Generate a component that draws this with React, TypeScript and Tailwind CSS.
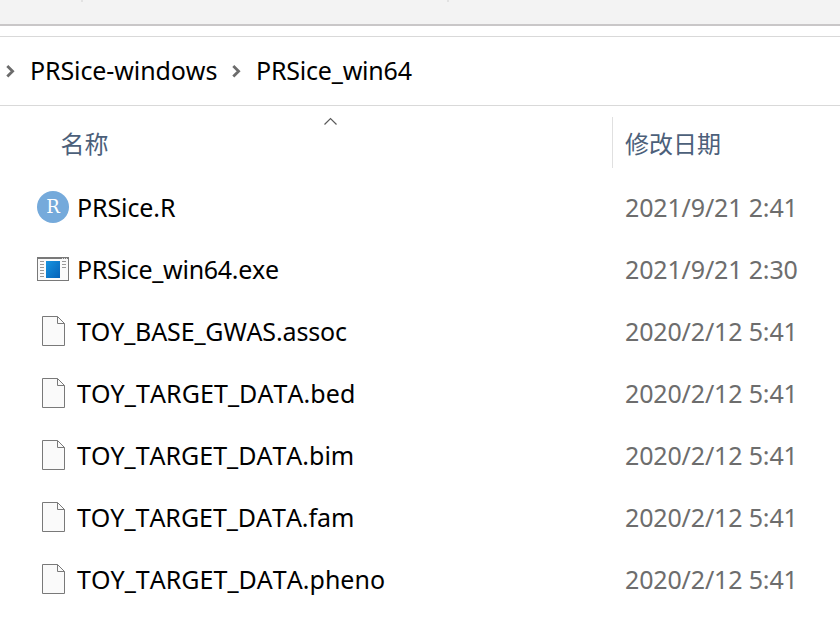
type Kind = 'r' | 'exe' | 'file';

const files: { name: string; date: string; kind: Kind; tracking: string }[] = [
  { name: 'PRSice.R', date: '2021/9/21 2:41', kind: 'r', tracking: 'tracking-[-0.1px]' },
  { name: 'PRSice_win64.exe', date: '2021/9/21 2:30', kind: 'exe', tracking: 'tracking-[-0.28px]' },
  { name: 'TOY_BASE_GWAS.assoc', date: '2020/2/12 5:41', kind: 'file', tracking: 'tracking-[-0.14px]' },
  { name: 'TOY_TARGET_DATA.bed', date: '2020/2/12 5:41', kind: 'file', tracking: 'tracking-[0.08px]' },
  { name: 'TOY_TARGET_DATA.bim', date: '2020/2/12 5:41', kind: 'file', tracking: '' },
  { name: 'TOY_TARGET_DATA.fam', date: '2020/2/12 5:41', kind: 'file', tracking: 'tracking-[-0.03px]' },
  { name: 'TOY_TARGET_DATA.pheno', date: '2020/2/12 5:41', kind: 'file', tracking: 'tracking-[0.03px]' },
];

function Chevron() {
  return (
    <svg width="10" height="14" viewBox="0 0 10 14" fill="none" className="shrink-0">
      <path d="M1.3 2 L6.6 7.3 L1.3 12.6" stroke="#6c6c6c" strokeWidth="2.8" />
    </svg>
  );
}

function FileIcon({ kind }: { kind: Kind }) {
  if (kind === 'r') {
    return (
      <div className="flex h-8 w-8 items-center justify-center rounded-full bg-[#75aadb] pb-px font-['DejaVu_Serif',serif] text-[18px] leading-none text-white">
        R
      </div>
    );
  }
  if (kind === 'exe') {
    return (
      <svg width="32" height="24" viewBox="0 0 32 24" shapeRendering="crispEdges">
        <defs>
          <linearGradient id="blue" x1="0" y1="0" x2="1" y2="1">
            <stop offset="0" stopColor="#1593e0" />
            <stop offset="1" stopColor="#0662b8" />
          </linearGradient>
        </defs>
        <rect x="0.5" y="0.5" width="31" height="23" fill="#fafafa" stroke="#797979" />
        <rect x="0" y="0" width="32" height="2" fill="#797979" />
        <path d="M25 1.5h1M27 1.5h1M29 1.5h1" stroke="#ddd" />
        <rect x="9" y="4" width="14" height="17" fill="url(#blue)" />
        <path
          d="M3 4.5h4M3 7.5h4M3 10.5h4M3 13.5h4M3 16.5h4M3 19.5h4M25 4.5h4M25 7.5h4M25 10.5h4"
          stroke="#999"
        />
      </svg>
    );
  }
  return (
    <svg width="23" height="30" viewBox="0 0 23 30" className="ml-px">
      <path d="M0.5 0.5H15.5L22.5 7.5V29.5H0.5Z" fill="#fafafa" stroke="#797979" />
      <path d="M15.5 0.5V7.5H22.5" fill="none" stroke="#797979" />
    </svg>
  );
}

export default function App() {
  return (
    <div className="flex h-[623px] w-[840px] flex-col overflow-hidden bg-white font-['Noto_Sans','Noto_Sans_CJK_SC',sans-serif] text-[25px] leading-[34px] text-black [font-kerning:none]">
      <div className="flex h-[26px] shrink-0 border-b-2 border-[#c9c7c8] bg-[#f3f3f3]">
        <div className="ml-[81px] h-[2px] w-[2px] bg-[#e2e2e2]" />
        <div className="ml-[364px] h-[2px] w-[2px] bg-[#e2e2e2]" />
      </div>
      <div className="mt-[10px] flex h-[70px] shrink-0 items-center border-y border-[#d9d9d9] pl-[6px]">
        <Chevron />
        <span className="ml-[14px] w-[202px] whitespace-nowrap pb-[2px] tracking-[-0.1px]">PRSice-windows</span>
        <Chevron />
        <span className="ml-[14px] whitespace-nowrap pb-[2px] tracking-[-0.2px]">PRSice_win64</span>
      </div>
      <div className="flex h-[70px] shrink-0 text-[24px] text-[#4c607a]">
        <div className="flex w-[612px] pl-[60.5px] pt-[11px]">
          <span className="w-[263.5px] pt-[10px]">名称</span>
          <svg width="14" height="8" viewBox="0 0 14 8" fill="none">
            <path d="M0.5 7.5 L6.5 1.5 L12.5 7.5" stroke="#5a5a5a" strokeWidth="1.2" />
          </svg>
        </div>
        <div className="mt-[11px] h-[51px] border-l border-[#e0e0e0] pl-[12px] pt-[10px]">修改日期</div>
      </div>
      <div className="flex flex-col">
        {files.map((f) => (
          <div key={f.name} className="flex h-[62px] items-center">
            <div className="ml-[37px] flex w-[32px] justify-center">
              <FileIcon kind={f.kind} />
            </div>
            <span className={`ml-[6px] w-[550px] whitespace-nowrap pl-[2px] ${f.tracking}`}>{f.name}</span>
            <span className="whitespace-nowrap tracking-[-0.15px] text-[#6d6d6d]">{f.date}</span>
          </div>
        ))}
      </div>
    </div>
  );
}
